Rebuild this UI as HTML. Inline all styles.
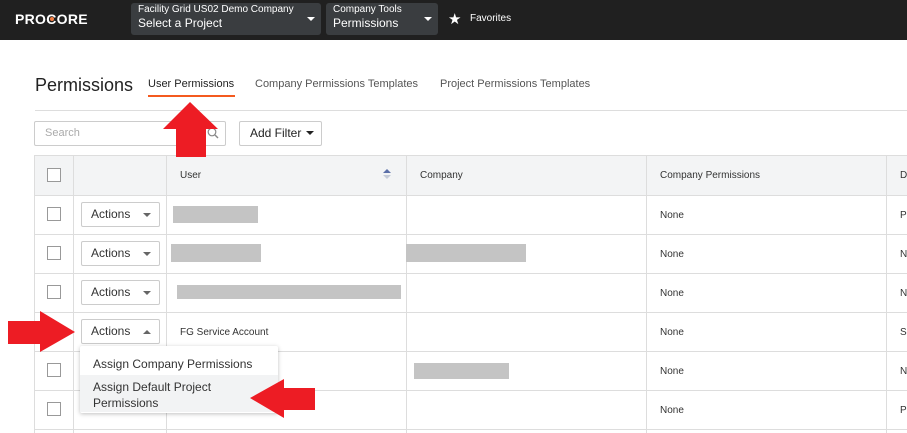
<!DOCTYPE html><html><head><style>
*{margin:0;padding:0;box-sizing:border-box}
body{width:907px;height:433px;overflow:hidden;background:#fff;font-family:"Liberation Sans",sans-serif;position:relative;color:#333}
.a{position:absolute;white-space:nowrap}
.top{left:0;top:0;width:907px;height:40px;background:#202020}
.dd{background:#3a3d40;border-radius:3px;color:#fff}
.car{width:0;height:0;border-left:4px solid transparent;border-right:4px solid transparent;border-top:4px solid #fff}
.gl{background:#ddd}
.cb{width:14px;height:14px;border:1px solid #999;background:#fff}
.btn{border:1px solid #ccc;border-radius:2px;background:#fff;font-size:12px;color:#333}
.bar{background:#c4c4c4}
.t{font-size:10px;color:#333}
</style></head><body>
<div class="a top"></div>
<div class="a" style="left:15px;top:11px;color:#fff;font-weight:bold;font-size:14px;letter-spacing:0.3px">PRO<span style="position:relative">C<span style="position:absolute;left:4px;top:6px;width:4px;height:4px;border-radius:50%;background:#f47e42"></span></span>ORE</div>
<div class="a dd" style="left:131px;top:3px;width:190px;height:32px"></div>
<div class="a" style="left:138px;top:4px;color:#fff;font-size:10px">Facility Grid US02 Demo Company</div>
<div class="a" style="left:138px;top:16px;color:#fff;font-size:12px">Select a Project</div>
<div class="a car" style="left:307px;top:17px"></div>
<div class="a dd" style="left:326px;top:3px;width:112px;height:32px"></div>
<div class="a" style="left:333px;top:4px;color:#fff;font-size:10px">Company Tools</div>
<div class="a" style="left:333px;top:16px;color:#fff;font-size:12px">Permissions</div>
<div class="a car" style="left:424px;top:17px"></div>
<div class="a" style="left:448px;top:10px;color:#fff;font-size:15px">★</div>
<div class="a" style="left:470px;top:13px;color:#fff;font-size:10px">Favorites</div>

<div class="a" style="left:35px;top:75px;font-size:18px;color:#222">Permissions</div>
<div class="a" style="left:148px;top:78px;font-size:11px;color:#222">User Permissions</div>
<div class="a" style="left:148px;top:95px;width:87px;height:2px;background:#f45a1f"></div>
<div class="a" style="left:255px;top:78px;font-size:11px;color:#555">Company Permissions Templates</div>
<div class="a" style="left:440px;top:78px;font-size:11px;color:#555">Project Permissions Templates</div>
<div class="a gl" style="left:35px;top:110px;width:872px;height:1px"></div>

<div class="a btn" style="left:34px;top:121px;width:192px;height:25px"></div>
<div class="a" style="left:45px;top:127px;font-size:11px;color:#aaa">Search</div>
<svg class="a" style="left:207px;top:127px" width="12" height="12"><circle cx="5" cy="5" r="3.8" fill="none" stroke="#888" stroke-width="1.2"/><line x1="8" y1="8" x2="11" y2="11" stroke="#888" stroke-width="1.4"/></svg>
<div class="a btn" style="left:239px;top:121px;width:83px;height:25px"></div>
<div class="a" style="left:250px;top:126px;font-size:12px;color:#222">Add Filter</div>
<div class="a car" style="left:306px;top:131px;border-top-color:#222"></div>

<div class="a" style="left:34px;top:156px;width:873px;height:39px;background:#f3f4f5"></div>
<div class="a gl" style="left:34px;top:155px;width:873px;height:1px"></div>
<div class="a gl" style="left:34px;top:195px;width:873px;height:1px"></div>
<div class="a gl" style="left:34px;top:234px;width:873px;height:1px"></div>
<div class="a gl" style="left:34px;top:273px;width:873px;height:1px"></div>
<div class="a gl" style="left:34px;top:312px;width:873px;height:1px"></div>
<div class="a gl" style="left:34px;top:351px;width:873px;height:1px"></div>
<div class="a gl" style="left:34px;top:390px;width:873px;height:1px"></div>
<div class="a gl" style="left:34px;top:429px;width:873px;height:1px"></div>
<div class="a gl" style="left:34px;top:155px;width:1px;height:278px"></div>
<div class="a gl" style="left:73px;top:155px;width:1px;height:278px"></div>
<div class="a gl" style="left:166px;top:155px;width:1px;height:278px"></div>
<div class="a gl" style="left:406px;top:155px;width:1px;height:278px"></div>
<div class="a gl" style="left:646px;top:155px;width:1px;height:278px"></div>
<div class="a gl" style="left:886px;top:155px;width:1px;height:278px"></div>

<div class="a cb" style="left:47px;top:168px"></div>
<div class="a t" style="left:180px;top:170px">User</div>
<svg class="a" style="left:383px;top:169px" width="8" height="10"><polygon points="4,0 8,4 0,4" fill="#5b6fa8"/><polygon points="0,6 8,6 4,10" fill="#c5cbd8"/></svg>
<div class="a t" style="left:420px;top:170px">Company</div>
<div class="a t" style="left:660px;top:170px">Company Permissions</div>
<div class="a t" style="left:900px;top:170px">D</div>

<div class="a cb" style="left:47px;top:207px"></div><div class="a btn" style="left:81px;top:202px;width:79px;height:25px"></div><div class="a" style="left:91px;top:207px;font-size:12px">Actions</div><div class="a car" style="left:143px;top:213px;border-top-color:#666"></div>
<div class="a bar" style="left:173px;top:206px;width:85px;height:17px"></div>
<div class="a t" style="left:660px;top:210px">None</div><div class="a t" style="left:900px;top:210px">P</div>

<div class="a cb" style="left:47px;top:246px"></div><div class="a btn" style="left:81px;top:241px;width:79px;height:25px"></div><div class="a" style="left:91px;top:246px;font-size:12px">Actions</div><div class="a car" style="left:143px;top:252px;border-top-color:#666"></div>
<div class="a bar" style="left:171px;top:244px;width:90px;height:18px"></div><div class="a bar" style="left:406px;top:244px;width:120px;height:18px"></div>
<div class="a t" style="left:660px;top:249px">None</div><div class="a t" style="left:900px;top:249px">N</div>

<div class="a cb" style="left:47px;top:285px"></div><div class="a btn" style="left:81px;top:280px;width:79px;height:25px"></div><div class="a" style="left:91px;top:285px;font-size:12px">Actions</div><div class="a car" style="left:143px;top:291px;border-top-color:#666"></div>
<div class="a bar" style="left:177px;top:285px;width:224px;height:14px"></div>
<div class="a t" style="left:660px;top:288px">None</div><div class="a t" style="left:900px;top:288px">N</div>

<div class="a btn" style="left:81px;top:319px;width:79px;height:25px"></div><div class="a" style="left:91px;top:324px;font-size:12px">Actions</div><div class="a car" style="left:143px;top:330px;border-top:none;border-bottom:4px solid #666"></div>
<div class="a t" style="left:180px;top:327px">FG Service Account</div>
<div class="a t" style="left:660px;top:327px">None</div><div class="a t" style="left:900px;top:327px">S</div>

<div class="a cb" style="left:47px;top:363px"></div>
<div class="a bar" style="left:414px;top:363px;width:95px;height:16px"></div>
<div class="a t" style="left:660px;top:366px">None</div><div class="a t" style="left:900px;top:366px">N</div>

<div class="a cb" style="left:47px;top:402px"></div>
<div class="a t" style="left:660px;top:405px">None</div><div class="a t" style="left:900px;top:405px">P</div>

<div class="a" style="left:80px;top:346px;width:198px;height:67px;background:#fff;box-shadow:0 1px 4px rgba(0,0,0,.25);border-radius:2px"></div>
<div class="a" style="left:80px;top:375px;width:198px;height:37px;background:#f2f3f4"></div>
<div class="a" style="left:93px;top:357px;font-size:12px;color:#333">Assign Company Permissions</div>
<div class="a" style="left:93px;top:379px;font-size:12px;color:#333;line-height:16px">Assign Default Project<br>Permissions</div>

<svg class="a" style="left:0;top:0" width="907" height="433">
<polygon fill="#ed1c24" points="190,102 218,129 206,129 206,157 176,157 176,129 163,129"/>
<polygon fill="#ed1c24" points="8,321 40,321 40,311 75,332 40,352 40,344 8,344"/>
<polygon fill="#ed1c24" points="250,398 284,379 284,388 315,388 315,410 284,410 284,418"/>
</svg>
</body></html>
